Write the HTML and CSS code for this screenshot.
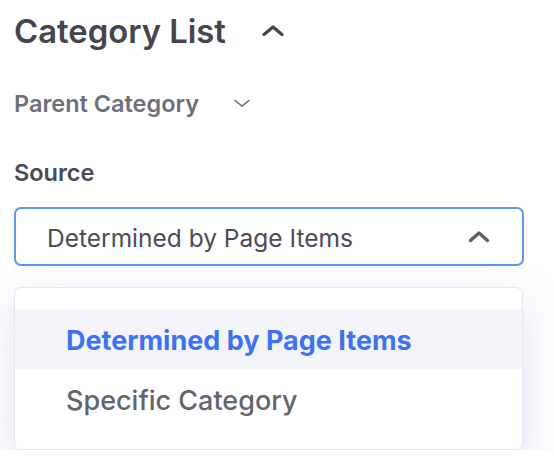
FILE: index.html
```html
<!DOCTYPE html>
<html lang="en">
<head>
<meta charset="utf-8">
<link rel="stylesheet" href="styles.css">
</head>
<body>
<div class="panel">
  <div class="section-head">
    <h1 class="title">Category List</h1>
    <svg class="chev-title" width="22" height="11" viewBox="0 0 22 11"><path d="M2 9.5 L11 2 L20 9.5" fill="none" stroke="#45464f" stroke-width="3.2" stroke-linecap="round" stroke-linejoin="round"/></svg>
  </div>
  <div class="sub-head">
    <span class="sub-title">Parent Category</span>
    <svg class="chev-sub" width="18" height="9" viewBox="0 0 18 9"><path d="M2 1.5 L9 7.2 L16 1.5" fill="none" stroke="#6e7079" stroke-width="1.6" stroke-linecap="round" stroke-linejoin="round"/></svg>
  </div>
  <div class="field-label">Source</div>
  <div class="select">
    <span class="select-value">Determined by Page Items</span>
    <svg class="chev-select" width="22" height="13" viewBox="0 0 22 13"><path d="M2.5 10.5 L11 3 L19.5 10.5" fill="none" stroke="#5f6069" stroke-width="3.4" stroke-linecap="round" stroke-linejoin="round"/></svg>
  </div>
  <ul class="menu">
    <li class="menu-item active">Determined by Page Items</li>
    <li class="menu-item">Specific Category</li>
  </ul>
</div>
</body>
</html>
```
FILE: styles.css
```css
html, body {
  margin: 0;
  padding: 0;
  background: #ffffff;
}
body {
  font-family: Inter, "Noto Sans", "Liberation Sans", sans-serif;
  color: #45464f;
}
.panel {
  padding: 11px 30px 0 14px;
  width: 510px;
}
.section-head {
  display: flex;
  align-items: center;
  gap: 36px;
  height: 40px;
}
.title {
  margin: 0;
  font-size: 32.8px;
  font-weight: 600;
  line-height: 40px;
  letter-spacing: 0;
  color: #44454e;
}
.chev-title {
  margin-top: -2px;
}
.sub-head {
  display: flex;
  align-items: center;
  gap: 34px;
  margin-top: 38px;
  height: 30px;
}
.sub-title {
  font-size: 23.5px;
  font-weight: 600;
  line-height: 30px;
  letter-spacing: 0;
  color: #6e7079;
}
.chev-sub {
  margin-top: -2px;
}
.field-label {
  margin-top: 39px;
  font-size: 23.5px;
  font-weight: 600;
  line-height: 30px;
  color: #4a4b55;
}
.select {
  margin-top: 19px;
  box-sizing: border-box;
  height: 59px;
  width: 510px;
  border: 2px solid #5e97f2;
  border-radius: 7px;
  display: flex;
  align-items: center;
  justify-content: space-between;
  padding: 2px 32px 0 31px;
}
.select-value {
  font-size: 24.5px;
  font-weight: 400;
  color: #4b4c55;
}
.chev-select {
  margin-top: -2px;
}
.menu {
  list-style: none;
  margin: 21px 0 0 0;
  box-sizing: border-box;
  width: 509px;
  padding: 21px 0 20px 0;
  border: 1px solid #e6e7ee;
  border-radius: 7px;
  background: #ffffff;
  box-shadow: 0 14px 44px rgba(105, 115, 185, 0.22);
}
.menu-item {
  height: 58px;
  padding-top: 2px;
  line-height: 60px;
  padding-left: 51px;
  font-size: 27px;
  font-weight: 500;
  color: #62646e;
  white-space: nowrap;
}
.menu-item.active {
  background: #f4f5fa;
  color: #3d73f2;
  font-weight: 700;
}
```
